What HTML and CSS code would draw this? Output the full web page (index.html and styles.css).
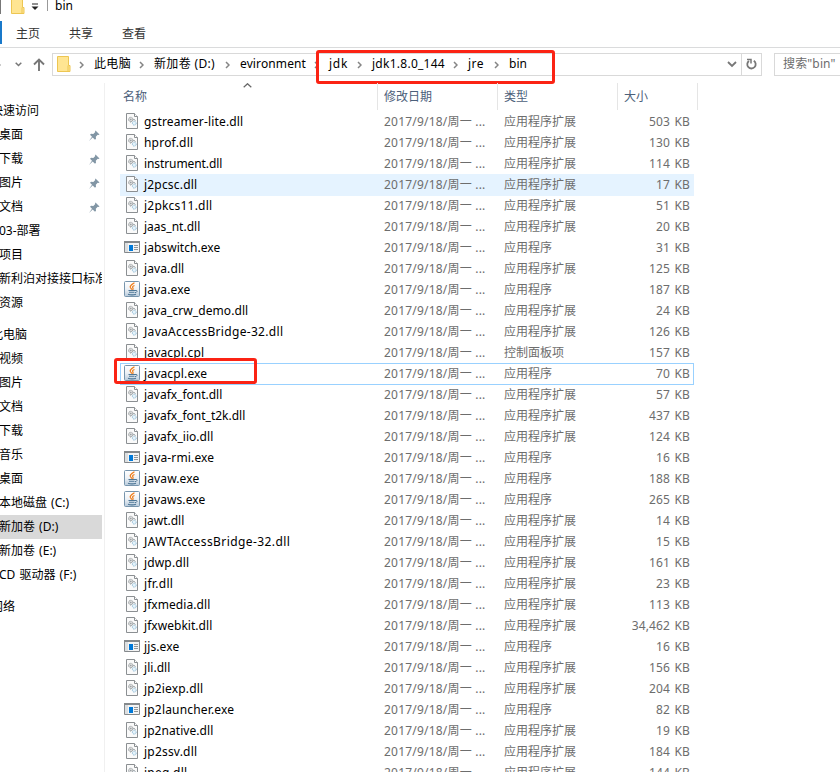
FILE: index.html
```html
<!DOCTYPE html>
<html lang="zh-CN">
<head>
<meta charset="utf-8">
<title>bin</title>
<link rel="stylesheet" href="styles.css">
</head>
<body>
<svg class="sprite" aria-hidden="true">
  <symbol id="dll" viewBox="0 0 12 16"><path d="M.5.5h8l3 3v12H.5z" fill="#fafafa" stroke="#8b8f92"/><path d="M8.500.5v3h3" fill="#fff" stroke="#8b8f92"/><circle cx="4.800" cy="6.500" r="2.200" fill="#ddd" stroke="#8d9498" stroke-dasharray="1 .5"/><circle cx="4.800" cy="6.500" r=".7" fill="#8d9498"/><path d="M4.500 9.500l3.500-3.500 1.500 2" fill="none" stroke="#a8aeb1"/><circle cx="8.300" cy="10.200" r="1.900" fill="#e5f3fb" stroke="#8dbad5" stroke-dasharray="1 .5"/></symbol>
  <symbol id="exe" viewBox="0 0 16 12"><path d="M.5.5h15v11H.5z" fill="#f4f4f4" stroke="#85898c"/><path d="M0 0h16v2H0z" fill="#85898c"/><path d="M1 2h3v9H1z" fill="#dcdfe1"/><path d="M5 4h4v6H5z" fill="#0078d7"/><path d="M10 4.500h4M10 6.500h4M10 8.500h4" stroke="#92979a"/></symbol>
  <symbol id="java" viewBox="0 0 16 16"><linearGradient id="jg" x2="0" y2="1"><stop stop-color="#fff"/><stop offset=".5" stop-color="#eef2f6"/><stop offset="1" stop-color="#b7cadb"/></linearGradient><rect x=".5" y=".5" width="15" height="15" rx="1" fill="url(#jg)" stroke="#7795ad"/><path d="M10.500 1.800C7.500 3.800 6 4.500 6.200 6c.1 1 1.300 1.600 1.600 2.700M10.500 4.500C8.200 5.500 8.300 6.200 9 7.200q.4.800-.4 1.600" fill="none" stroke="#ef7d1a" stroke-width="1.200"/><path d="M4.500 9.500h6.500M5 11.300h5.500M4 13.300q4 1.200 8 0" fill="none" stroke="#4e7796" stroke-width="1.100"/><path d="M11 9.500q2.500-.5 2 1-.5 1-2 1.200" fill="none" stroke="#4e7796"/></symbol>
  <symbol id="folder" viewBox="0 0 14 16"><path d="M.5.5h11v9h1.500v6H.5z" fill="#ffe592" stroke="#edc652"/><path d="M11 9.500v5.500" stroke="#edc652"/></symbol>
  <symbol id="pin" viewBox="0 0 11 11"><path d="M6.500.5l4 4-1 .5-.8-.2L6.800 6.700l.2 2-1 1L3.700 7.500 0 11l3-4.200L1 4.700l1.100-1 2.200.2 2-1.900-.3-.8z" fill="#8296a5"/></symbol>
  <symbol id="sep" viewBox="0 0 5 8"><path d="M1 1l3 3-3 3" fill="none" stroke="#858585" stroke-width="1.500"/></symbol>
</svg>
<div class="window">
  <div class="titlebar">
    <span class="edge"></span><svg class="folder"><use href="#folder"/></svg>
    <svg class="qat" viewBox="0 0 8 8"><path d="M1 1h6" stroke="#222"/><path d="M.5 3.500h7L4 7z" fill="#222"/></svg>
    <span class="bar"></span><span class="title">bin</span>
  </div>
  <div class="tabs"><span class="filetab"></span><span>主页</span><span>共享</span><span>查看</span></div>
  <div class="nav">
    <span class="dot"></span>
    <svg class="recent" viewBox="0 0 7 5"><path d="M.7.700l2.800 2.800L6.300.700" fill="none" stroke="#777" stroke-width="1.500"/></svg>
    <svg class="up" viewBox="0 0 12 13"><path d="M6 13V1.500M1 6.500l5-5 5 5" fill="none" stroke="#777" stroke-width="1.900"/></svg>
    <div class="address">
      <svg class="folder"><use href="#folder"/></svg>
      <div class="crumbs" id="crumbs"></div>
      <svg class="drop" viewBox="0 0 10 7"><path d="M1 1l4 4 4-4" fill="none" stroke="#777" stroke-width="1.800"/></svg>
      <span class="refresh"><svg viewBox="0 0 11 12"><path d="M7.800 2.800A4.200 4.200 0 1 1 3 2.900" fill="none" stroke="#777" stroke-width="1.800"/><path d="M1 1.500h4v4" fill="none" stroke="#777" stroke-width="1.500"/></svg></span>
    </div>
    <div class="search">搜索"bin"</div>
    <div class="mark mark-path"></div>
  </div>
  <div class="main">
    <div class="sidebar" id="sidebar"></div>
    <div class="files">
      <div class="head">
        <span class="c-name">名称<svg class="sort" viewBox="0 0 9 5"><path d="M.7 4.300L4.500.7l3.800 3.600" fill="none" stroke="#666" stroke-width="1.200"/></svg></span><span class="c-date">修改日期</span><span class="c-type">类型</span><span class="c-size">大小</span>
      </div>
      <div class="rows" id="rows"></div>
      <div class="mark mark-file"></div>
    </div>
  </div>
</div>
<script src="app.js"></script>
</body>
</html>
```
FILE: styles.css
```css
* { box-sizing: border-box; }
body { margin: 0; background: #fff; color: #000; font: 12px/20px "Noto Sans", "Noto Sans CJK SC", sans-serif; }
svg { display: block; flex: none; }
.sprite { position: absolute; width: 0; height: 0; }
.window { width: 840px; height: 772px; overflow: hidden; display: flex; flex-direction: column; }
.titlebar { display: flex; height: 21px; flex: none; }
.edge { width: 1px; height: 14px; background: #777; margin-right: 10px; }
.folder { width: 14px; height: 16px; }
.titlebar .folder { margin-top: -2px; }
.qat { width: 8px; height: 8px; margin: 3px 0 0 6px; }
.bar { width: 1px; height: 11px; background: #999; margin-left: 8px; }
.title { margin: -4px 0 0 7px; }
.tabs { display: flex; height: 27px; flex: none; gap: 29px; border-bottom: 1px solid #dadbdc; line-height: 25px; color: #333; }
.filetab { width: 2px; height: 23px; background: #1979ca; margin-right: -15px; }
.nav { position: relative; display: flex; height: 35px; flex: none; padding-top: 5px; }
.dot { width: 1px; flex: none; height: 2px; background: #ccc; margin-top: 11px; }
.recent { width: 7px; height: 5px; margin: 9px 0 0 14px; }
.up { width: 12px; height: 13px; margin: 5px 0 0 11px; }
.address { width: 710px; flex: none; height: 23px; border: 1px solid #d9d9d9; margin-left: 7px; display: flex; align-items: center; padding-left: 4px; }
.address .folder { margin-top: -2px; }
.crumbs { flex: 1; display: grid; grid-template-columns: 60px 86px 89px 43px 96px 41px 60px; margin-left: 8px; line-height: 18px; }
.crumb { display: flex; align-items: center; white-space: nowrap; }
.crumb > span { margin-top: -2px; }
.crumb svg { width: 5px; height: 8px; margin: 0 10px 0 0; }
.drop { width: 10px; height: 7px; margin-right: 4px; }
.refresh { width: 20px; height: 21px; border-left: 1px solid #d9d9d9; padding: 4px 0 0 4px; }
.refresh svg { width: 11px; height: 12px; }
.search { width: 90px; flex: none; height: 23px; border: 1px solid #d9d9d9; margin-left: 12px; padding-left: 8px; color: #6d6d6d; white-space: nowrap; letter-spacing: .15px; }
.mark { position: absolute; border: 3px solid #fb2314; border-radius: 3px; }
.mark-path { left: 316px; top: 2px; width: 239px; height: 34px; }
.mark-file { left: 9px; top: 275px; width: 143px; height: 26px; }
.main { display: flex; flex: 1; min-height: 0; }
.sidebar { width: 105px; flex: none; border-right: 1px solid #f0f0f0; padding-top: 16px; }
.side { width: 102px; height: 24px; line-height: 24px; display: flex; justify-content: space-between; align-items: flex-start; overflow: hidden; white-space: nowrap; word-spacing: 1px; }
.side span { margin-left: -1px; }
.side.root span { margin-left: -9px; }
.side.gap { margin-top: 8px; }
.side.on { background: #d9d9d9; }
.side svg { width: 11px; height: 11px; margin: 7px 2px 0 0; }
.files { position: relative; width: 593px; }
.head { display: flex; height: 27px; color: #4c607a; line-height: 27px; }
.head span { border-right: 1px solid #e5e5e5; padding-left: 6px; position: relative; width: 120px; }
.head .c-name { width: 273px; padding-left: 18px; }
.head .c-size { width: 80px; }
.sort { position: absolute; left: 138px; top: 0; width: 9px; height: 5px; }
.rows { padding: 1px 0 0 15px; }
.row { width: 574px; height: 22px; margin-bottom: -1px; border: 1px solid transparent; display: grid; grid-template-columns: 23px 240px 120px 120px 66px; white-space: nowrap; color: #6d6d6d; align-items: center; line-height: 20px; }
.row svg { width: 16px; height: 16px; margin: -2px 0 0 3px; }
.row svg.exe { height: 12px; }
.row .name { color: #000; }
.row .size { text-align: right; word-spacing: 1.5px; letter-spacing: .1px; }
.row.hover { background: #e5f3ff; }
.row.focus { border-color: #99d1ff; }
```
FILE: app.js
```js
const crumbs = ['此电脑', '新加卷 (D:)', 'evironment', 'jdk', 'jdk1.8.0_144', 'jre', 'bin'];
document.getElementById('crumbs').innerHTML = crumbs
  .map(c => `<span class="crumb"><svg><use href="#sep"/></svg><span>${c}</span></span>`).join('');

const side = [
  ['快速访问', 'root'], ['桌面', 'pin'], ['下载', 'pin'], ['图片', 'pin'], ['文档', 'pin'],
  ['03-部署', ''], ['项目', ''], ['新利泊对接接口标准', ''], ['资源', ''],
  ['此电脑', 'root gap'], ['视频', ''], ['图片', ''], ['文档', ''], ['下载', ''], ['音乐', ''], ['桌面', ''],
  ['本地磁盘 (C:)', ''], ['新加卷 (D:)', 'on'], ['新加卷 (E:)', ''], ['CD 驱动器 (F:)', ''],
  ['网络', 'root gap']
];
document.getElementById('sidebar').innerHTML = side
  .map(([t, c]) => `<div class="side ${c}"><span>${t}</span>${c === 'pin' ? '<svg><use href="#pin"/></svg>' : ''}</div>`).join('');

// name, size, icon, row state, width of the name in px
const files = [
  ['gstreamer-lite.dll', '503', 'dll', '', 99], ['hprof.dll', '130', 'dll', '', 49],
  ['instrument.dll', '114', 'dll', '', 78], ['j2pcsc.dll', '17', 'dll', 'hover', 53],
  ['j2pkcs11.dll', '51', 'dll', '', 68], ['jaas_nt.dll', '20', 'dll', '', 56],
  ['jabswitch.exe', '31', 'exe', '', 76], ['java.dll', '125', 'dll', '', 40],
  ['java.exe', '187', 'java', '', 46], ['java_crw_demo.dll', '24', 'dll', '', 104],
  ['JavaAccessBridge-32.dll', '126', 'dll', '', 139], ['javacpl.cpl', '157', 'dll', '', 60],
  ['javacpl.exe', '70', 'java', 'focus', 63], ['javafx_font.dll', '57', 'dll', '', 78],
  ['javafx_font_t2k.dll', '437', 'dll', '', 101], ['javafx_iio.dll', '124', 'dll', '', 69],
  ['java-rmi.exe', '16', 'exe', '', 70], ['javaw.exe', '188', 'java', '', 55],
  ['javaws.exe', '265', 'java', '', 61], ['jawt.dll', '14', 'dll', '', 40],
  ['JAWTAccessBridge-32.dll', '15', 'dll', '', 146], ['jdwp.dll', '161', 'dll', '', 45],
  ['jfr.dll', '23', 'dll', '', 29], ['jfxmedia.dll', '113', 'dll', '', 66],
  ['jfxwebkit.dll', '34,462', 'dll', '', 68], ['jjs.exe', '16', 'exe', '', 35],
  ['jli.dll', '156', 'dll', '', 26], ['jp2iexp.dll', '204', 'dll', '', 59],
  ['jp2launcher.exe', '82', 'exe', '', 90], ['jp2native.dll', '19', 'dll', '', 69],
  ['jp2ssv.dll', '184', 'dll', '', 53], ['jpeg.dll', '144', 'dll', '', 43]
];
document.getElementById('rows').innerHTML = files.map(([n, s, i, c]) => {
  const type = n.endsWith('.cpl') ? '控制面板项' : n.endsWith('.exe') ? '应用程序' : '应用程序扩展';
  return `<div class="row ${c}"><svg class="${i}"><use href="#${i}"/></svg><div><span class="name">${n}</span></div>` +
    `<div><span class="date">2017/9/18/周一 ...</span></div><span>${type}</span><span class="size">${s} KB</span></div>`;
}).join('');

function fit(el, width) {
  const gap = (width - el.getBoundingClientRect().width) / el.textContent.length;
  el.style.letterSpacing = gap.toFixed(3) + 'px';
}
document.querySelectorAll('.name').forEach((el, k) => fit(el, files[k][4] + 0.3));
document.querySelectorAll('.date').forEach(el => fit(el, 101.5));
const crumbWidths = [37, 61, 66, 19, 73, 16, 18];
document.querySelectorAll('.crumb > span').forEach((el, k) => fit(el, crumbWidths[k]));
```
